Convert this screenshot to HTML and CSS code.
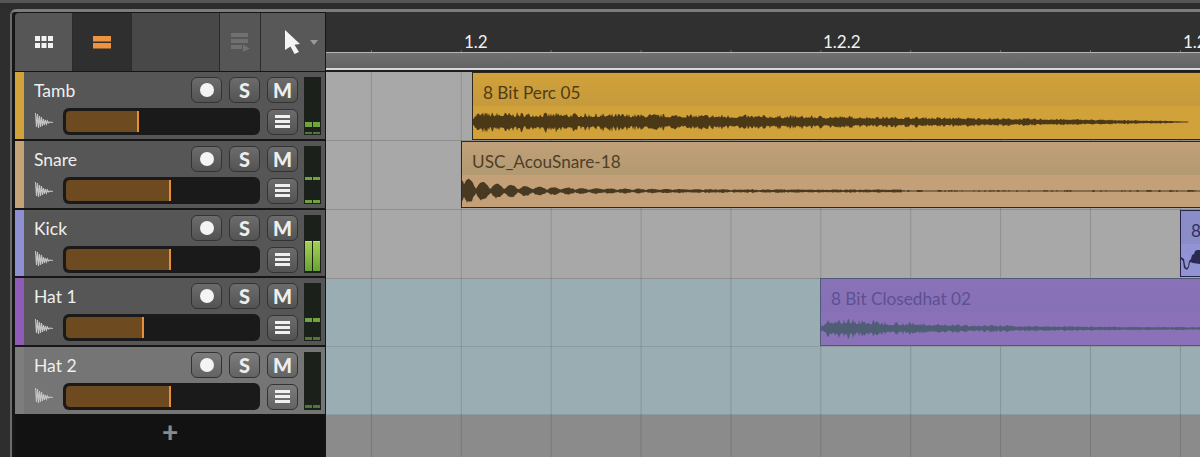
FILE: index.html
```html
<!DOCTYPE html>
<html lang="en">
<head>
  <meta charset="UTF-8">
  <title>Arranger</title>
  <link rel="stylesheet" href="styles.css">
</head>
<body>
  <div class="topbar"></div>
  <div class="workspace">
    <div class="sidebar">
      <div class="toolbar">
        <div class="tool tool-grid">
          <svg width="18" height="13" viewBox="0 0 18 13" fill="#f2f2f2">
            <rect x="0" y="0" width="5" height="5"/><rect x="6.5" y="0" width="5" height="5"/><rect x="13" y="0" width="5" height="5"/>
            <rect x="0" y="7" width="5" height="5"/><rect x="6.5" y="7" width="5" height="5"/><rect x="13" y="7" width="5" height="5"/>
          </svg>
        </div>
        <div class="tool tool-list">
          <svg width="18" height="13" viewBox="0 0 18 13" fill="#ee9440">
            <rect x="0" y="0" width="18" height="5.5"/><rect x="0" y="7" width="18" height="5.5"/>
          </svg>
        </div>
        <div class="tool tool-empty"></div>
        <div class="tool tool-seq">
          <svg width="20" height="20" viewBox="0 0 20 20" fill="#707070">
            <rect x="1" y="1" width="17" height="4"/><rect x="1" y="7" width="17" height="4"/><rect x="1" y="13" width="11" height="4"/>
            <path d="M13 12.5 L20 16.5 L13 20 Z"/>
          </svg>
        </div>
        <div class="tool tool-cursor">
          <svg width="16" height="24" viewBox="0 0 16 24" fill="#f4f4f4">
            <path d="M0 0 L15 14 L9.5 14.8 L14 22 L9.5 24 L5.5 16.5 L0 20 Z"/>
          </svg>
          <span class="caret"></span>
        </div>
      </div>

      <div class="track-list">
        <div class="track">
          <div class="strip strip-tamb"></div>
          <div class="track-main">
            <div class="track-row">
              <div class="track-name">Tamb</div>
              <button class="btn btn-rec"><span class="rec-dot"></span></button>
              <button class="btn">S</button>
              <button class="btn">M</button>
            </div>
            <div class="track-row track-row-low">
              <svg class="wave-icon" width="18" height="17" viewBox="0 0 18 17"><path d="M.5 1 L1.5 15 L2.5 2 L3.5 16 L4.5 4 L5.5 15 L6.5 5 L7.5 14 L8.5 7 L9.5 13 L10.5 8 L11.5 12 L12.5 9 L13.5 11 L15 10 L18 10.5"/></svg>
              <div class="fader"><div class="fader-fill" style="width:73px"></div></div>
              <button class="btn btn-menu"><span></span><span></span><span></span></button>
            </div>
          </div>
          <div class="meter">
            <div class="meter-ch"><i class="seg" style="top:45px;height:5px"></i><i class="seg seg-dim" style="top:55px;height:2px"></i></div>
            <div class="meter-ch"><i class="seg" style="top:45px;height:5px"></i><i class="seg seg-dim" style="top:55px;height:2px"></i></div>
          </div>
        </div>

        <div class="track">
          <div class="strip strip-snare"></div>
          <div class="track-main">
            <div class="track-row">
              <div class="track-name">Snare</div>
              <button class="btn btn-rec"><span class="rec-dot"></span></button>
              <button class="btn">S</button>
              <button class="btn">M</button>
            </div>
            <div class="track-row track-row-low">
              <svg class="wave-icon" width="18" height="17" viewBox="0 0 18 17"><path d="M.5 1 L1.5 15 L2.5 2 L3.5 16 L4.5 4 L5.5 15 L6.5 5 L7.5 14 L8.5 7 L9.5 13 L10.5 8 L11.5 12 L12.5 9 L13.5 11 L15 10 L18 10.5"/></svg>
              <div class="fader"><div class="fader-fill" style="width:105px"></div></div>
              <button class="btn btn-menu"><span></span><span></span><span></span></button>
            </div>
          </div>
          <div class="meter">
            <div class="meter-ch"><i class="seg" style="top:31px;height:3px"></i><i class="seg" style="top:54px;height:3px"></i></div>
            <div class="meter-ch"><i class="seg" style="top:31px;height:3px"></i><i class="seg" style="top:54px;height:3px"></i></div>
          </div>
        </div>

        <div class="track">
          <div class="strip strip-kick"></div>
          <div class="track-main">
            <div class="track-row">
              <div class="track-name">Kick</div>
              <button class="btn btn-rec"><span class="rec-dot"></span></button>
              <button class="btn">S</button>
              <button class="btn">M</button>
            </div>
            <div class="track-row track-row-low">
              <svg class="wave-icon" width="18" height="17" viewBox="0 0 18 17"><path d="M.5 1 L1.5 15 L2.5 2 L3.5 16 L4.5 4 L5.5 15 L6.5 5 L7.5 14 L8.5 7 L9.5 13 L10.5 8 L11.5 12 L12.5 9 L13.5 11 L15 10 L18 10.5"/></svg>
              <div class="fader"><div class="fader-fill" style="width:105px"></div></div>
              <button class="btn btn-menu"><span></span><span></span><span></span></button>
            </div>
          </div>
          <div class="meter">
            <div class="meter-ch"><i class="seg seg-hot" style="top:26px;height:30px"></i></div>
            <div class="meter-ch"><i class="seg seg-hot" style="top:26px;height:30px"></i></div>
          </div>
        </div>

        <div class="track">
          <div class="strip strip-hat1"></div>
          <div class="track-main">
            <div class="track-row">
              <div class="track-name">Hat 1</div>
              <button class="btn btn-rec"><span class="rec-dot"></span></button>
              <button class="btn">S</button>
              <button class="btn">M</button>
            </div>
            <div class="track-row track-row-low">
              <svg class="wave-icon" width="18" height="17" viewBox="0 0 18 17"><path d="M.5 1 L1.5 15 L2.5 2 L3.5 16 L4.5 4 L5.5 15 L6.5 5 L7.5 14 L8.5 7 L9.5 13 L10.5 8 L11.5 12 L12.5 9 L13.5 11 L15 10 L18 10.5"/></svg>
              <div class="fader"><div class="fader-fill" style="width:78px"></div></div>
              <button class="btn btn-menu"><span></span><span></span><span></span></button>
            </div>
          </div>
          <div class="meter">
            <div class="meter-ch"><i class="seg" style="top:35px;height:4px"></i><i class="seg seg-dim" style="top:54px;height:3px"></i></div>
            <div class="meter-ch"><i class="seg" style="top:35px;height:4px"></i><i class="seg seg-dim" style="top:54px;height:3px"></i></div>
          </div>
        </div>

        <div class="track track-muted">
          <div class="strip strip-hat2"></div>
          <div class="track-main">
            <div class="track-row">
              <div class="track-name">Hat 2</div>
              <button class="btn btn-rec"><span class="rec-dot"></span></button>
              <button class="btn">S</button>
              <button class="btn">M</button>
            </div>
            <div class="track-row track-row-low">
              <svg class="wave-icon" width="18" height="17" viewBox="0 0 18 17"><path d="M.5 1 L1.5 15 L2.5 2 L3.5 16 L4.5 4 L5.5 15 L6.5 5 L7.5 14 L8.5 7 L9.5 13 L10.5 8 L11.5 12 L12.5 9 L13.5 11 L15 10 L18 10.5"/></svg>
              <div class="fader"><div class="fader-fill" style="width:105px"></div></div>
              <button class="btn btn-menu"><span></span><span></span><span></span></button>
            </div>
          </div>
          <div class="meter">
            <div class="meter-ch"><i class="seg seg-dim" style="top:53px;height:3px"></i></div>
            <div class="meter-ch"><i class="seg seg-dim" style="top:53px;height:3px"></i></div>
          </div>
        </div>
      </div>

      <div class="add-track">+</div>
    </div>

    <div class="timeline">
      <div class="ruler">
        <span class="ruler-label label-a">1.2</span>
        <span class="ruler-label label-b">1.2.2</span>
        <span class="ruler-label label-c">1.2</span>
      </div>
      <div class="loop-bar"></div>
      <div class="lanes">
        <div class="lane"></div>
        <div class="lane"></div>
        <div class="lane"></div>
        <div class="lane lane-blue"></div>
        <div class="lane lane-blue"></div>
        <div class="lane-rest"></div>
        <div class="grid-lines"></div>

        <div class="clip clip-tamb">
          <div class="clip-title">8 Bit Perc 05</div>
          <svg class="clip-wave" data-kind="perc" width="728" height="33"></svg>
        </div>
        <div class="clip clip-snare">
          <div class="clip-title">USC_AcouSnare-18</div>
          <svg class="clip-wave" data-kind="snare" width="739" height="33"></svg>
        </div>
        <div class="clip clip-kick">
          <div class="clip-title">8</div>
          <svg class="clip-kick-wave" width="20" height="33" viewBox="0 0 20 33">
            <path d="M0 13 L3 15 L4 21 L5 24 L7 23 L8 17 L10 15 L11 11 L13 10 L14 7 L16 6 L20 6 L20 20 L12 19 L9 18 L8 23 L6 26 L3 24 L2 17 L0 15 Z"/>
          </svg>
        </div>
        <div class="clip clip-hat">
          <div class="clip-title">8 Bit Closedhat 02</div>
          <svg class="clip-wave" data-kind="hat" width="380" height="34"></svg>
        </div>
      </div>
    </div>
  </div>
  <script src="script.js"></script>
</body>
</html>
```

FILE: styles.css
```css
* {
  box-sizing: border-box;
}

html, body {
  margin: 0;
  padding: 0;
  height: 100%;
}

body {
  font-family: 'Lato', 'Liberation Sans', sans-serif;
  background: #2e2e2e;
  overflow: hidden;
}

.topbar {
  height: 9px;
  background: #2c2c2c;
  border-top: 3px solid #565656;
}

.workspace {
  display: flex;
  height: 448px;
  margin-left: 10px;
  border-top: 3px solid #7c7c7c;
  border-left: 2px solid #6c6c6c;
  border-top-left-radius: 6px;
  overflow: hidden;
}

/* left panel */
.sidebar {
  width: 314px;
  flex: none;
  display: flex;
  flex-direction: column;
  padding: 1px 1px 0 3px;
  background: #161616;
}

.toolbar {
  display: flex;
  height: 58px;
  flex: none;
  gap: 1px;
  background: #2b2b2b;
  border-top-left-radius: 4px;
  overflow: hidden;
}

.tool {
  display: flex;
  align-items: center;
  justify-content: center;
  background: #565656;
}

.tool-grid { width: 57px; }
.tool-list { width: 58px; background: #2f2f2f; }
.tool-empty { width: 87px; background: #484848; }
.tool-seq { width: 40px; }
.tool-cursor { flex: 1; position: relative; background: #585858; }

.caret {
  position: absolute;
  right: 7px;
  top: 27px;
  border-left: 4px solid transparent;
  border-right: 4px solid transparent;
  border-top: 5px solid #9a9a9a;
}

.track-list {
  display: grid;
  grid-template-rows: 69px 69px 68px 69px 67px;
  margin-top: 1px;
}

.track {
  display: flex;
  height: 100%;
  border-bottom: 2px solid #161616;
  background: #565656;
}

.track-muted {
  background: #757575;
  border-bottom: 0;
}

.strip {
  width: 9px;
  flex: none;
}

.strip-tamb { background: #d2a33a; }
.strip-snare { background: #c4a379; }
.strip-kick { background: #8e90d2; }
.strip-hat1 { background: #8e5cb6; }
.strip-hat2 { background: #7d7d7d; }

.track-main {
  width: 274px;
  flex: none;
  padding: 5px 0 0 10px;
  display: flex;
  flex-direction: column;
  gap: 5px;
}

.track-row {
  display: flex;
  align-items: center;
  gap: 7px;
  height: 26px;
}

.track-row-low {
  height: 27px;
  gap: 0;
}

.track-name {
  flex: 1;
  font-size: 17.5px;
  color: #efefef;
}

.btn {
  width: 31px;
  height: 26px;
  padding: 0;
  display: flex;
  align-items: center;
  justify-content: center;
  font-family: 'Lato', 'Liberation Sans', sans-serif;
  font-size: 20px;
  font-weight: 900;
  color: #ededed;
  background: linear-gradient(#6c6c6c, #535353);
  border: 1px solid #333;
  border-radius: 6px;
}

.track-muted .btn {
  background: linear-gradient(#7c7c7c, #636363);
}

.rec-dot {
  width: 14px;
  height: 14px;
  border-radius: 50%;
  background: #f4f4f4;
}

.btn-menu {
  flex-direction: column;
  gap: 2px;
  margin-left: 7px;
}

.btn-menu span {
  width: 15px;
  height: 3px;
  background: #f0f0f0;
}

.wave-icon {
  flex: none;
  margin: -3px 10px 0 1px;
  fill: none;
  stroke: #c4c4c4;
  stroke-width: 1.1;
}

.fader {
  width: 197px;
  height: 27px;
  padding: 3px;
  background: #1a1a1a;
  border-radius: 6px;
}

.fader-fill {
  height: 100%;
  background: #6e4a20;
  border-right: 2px solid #e58f3c;
  border-radius: 4px 0 0 4px;
}

.meter {
  width: 17px;
  height: 58px;
  margin: 5px 0 0 6px;
  padding: 0 1px;
  display: flex;
  gap: 1px;
  background: #1c201b;
}

.meter-ch {
  flex: 1;
  position: relative;
}

.seg {
  position: absolute;
  left: 0;
  right: 0;
  background: #6fa53a;
}

.seg-dim { background: #4c7a35; }
.seg-hot { background: linear-gradient(#a2d252, #6aa232); border-top: 1px solid #c4e27c; }

.add-track {
  flex: 1;
  text-align: center;
  font-size: 28px;
  font-weight: 900;
  line-height: 34px;
  color: #8a8a8a;
  background: #121212;
}

/* arranger */
.timeline {
  flex: 1;
  min-width: 0;
  display: flex;
  flex-direction: column;
}

.ruler {
  position: relative;
  height: 40px;
  flex: none;
  background: #303030 linear-gradient(90deg, transparent 88.9px, #6a6a6a 88.9px) -44px 100% / 89.9px 2px repeat-x;
}

.ruler-label {
  position: absolute;
  top: 19px;
  font-size: 17px;
  color: #f0f0f0;
}

.label-a { left: 138px; }
.label-b { left: 497px; }
.label-c { left: 857px; }

.loop-bar {
  height: 20px;
  flex: none;
  background: linear-gradient(#707070, #626262);
  border-top: 1px solid #b5b5b5;
  border-bottom: 2px solid #1e1e1e;
  box-shadow: inset 0 -2px 0 #d8d8d8;
}

.lanes {
  position: relative;
  flex: 1;
  display: grid;
  grid-template-rows: 69px 69px 69px 68px 68px 1fr;
}

.lane {
  background: #a8a8a8;
  border-bottom: 1px solid #8e8e8e;
}

.lane-blue {
  background: #9aadb3;
  border-bottom: 1px solid #8b9ba0;
}

.lane-rest {
  background: #8b8b8b;
}

.grid-lines {
  position: absolute;
  inset: 0;
  background-image: linear-gradient(90deg, transparent 88.9px, rgba(0, 0, 0, .14) 88.9px);
  background-size: 89.9px 100%;
  background-position: -44px 0;
}

.clip {
  position: absolute;
  border: 1px solid #2e2a20;
  overflow: hidden;
}

.clip-title {
  height: 33px;
  padding: 10px 0 0 10px;
  font-size: 17.2px;
  line-height: 20px;
  white-space: nowrap;
}

.clip svg {
  display: block;
}

.clip-tamb {
  left: 146px;
  top: 0;
  right: -5px;
  height: 68px;
  background: #d2a23a;
  color: #4f3c17;
}

.clip-tamb .clip-title { background: linear-gradient(#d2a23a, #c59a3c); }
.clip-tamb .clip-wave { fill: #4a3817; }

.clip-snare {
  left: 135px;
  top: 69px;
  right: -5px;
  height: 67px;
  background: #c3a077;
  color: #4d3f2a;
}

.clip-snare .clip-title { background: linear-gradient(#c1a078, #b39a70); }
.clip-snare .clip-wave { fill: #483a22; }

.clip-kick {
  left: 854px;
  top: 138px;
  right: -5px;
  height: 67px;
  background: #9293d4;
  color: #2f2f66;
  border-color: #26264a;
}

.clip-kick .clip-title { background: #8a8dc8; }
.clip-kick-wave { fill: #2a2a52; }

.clip-hat {
  left: 494px;
  top: 206px;
  right: -5px;
  height: 68px;
  background: #8a71b8;
  color: #5b5193;
  border-color: #4f5a78;
}

.clip-hat .clip-title { background: linear-gradient(#8a72b8, #8670b6); }
.clip-hat .clip-wave { fill: #4f5e75; }
```

FILE: script.js
```js
// draws the clip waveforms, a seeded random keeps them the same on every load
let seed = 7;
function rnd() {
  seed = (seed * 16807) % 2147483647;
  return seed / 2147483647;
}

const shapes = {
  perc: x => {
    const t = x / 715;
    if (t > 1) return 0;
    const spike = rnd();
    return Math.pow(1 - t, 0.7) * (5 + spike * spike * 5) * Math.min(1, 0.5 + x / 8) + 0.4;
  },
  snare: x => {
    if (x < 2) return 10;
    const ring = Math.abs(Math.sin(x / 4.5));
    const noise = rnd();
    if (x > 440) return noise > 0.75 ? 0.9 : 0.5;
    return Math.exp(-x / 40) * (1 + ring * 9) + ring * 2.5 * Math.exp(-x / 170) + 0.7 + noise * 0.8;
  },
  hat: x => {
    const spike = rnd();
    return Math.min(1, 0.2 + x / 16) * Math.exp(-x / 110) * (5 + spike * spike * 7) + 0.7 + spike * 0.5;
  }
};

document.querySelectorAll('.clip-wave').forEach(svg => {
  const w = +svg.getAttribute('width');
  const h = +svg.getAttribute('height');
  const mid = h / 2 - 0.5;
  const shape = shapes[svg.dataset.kind];
  const top = [];
  const bottom = [];
  for (let x = 0; x <= w; x += 1) {
    const a = shape(x);
    top.push(x + ',' + (mid - a).toFixed(1));
    bottom.unshift(x + ',' + (mid + a * (0.8 + rnd() * 0.35)).toFixed(1));
  }
  const poly = document.createElementNS('http://www.w3.org/2000/svg', 'polygon');
  poly.setAttribute('points', top.concat(bottom).join(' '));
  svg.appendChild(poly);
});
```
